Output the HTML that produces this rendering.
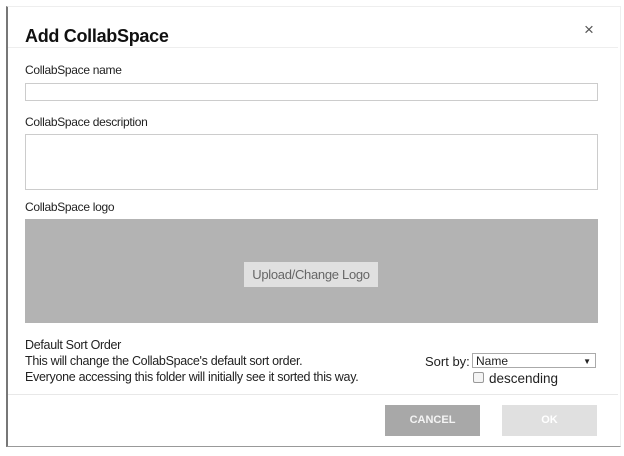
<!DOCTYPE html>
<html><head><style>
body{margin:0;width:624px;height:456px;background:#fff;font-family:"Liberation Sans",sans-serif;color:#222;position:relative;overflow:hidden}
.a{position:absolute}
.t{font-size:12px;letter-spacing:-0.3px;white-space:nowrap}
</style></head><body>
<div class="a" style="left:6px;top:6px;width:612px;height:439px;border-left:2px solid #777;border-bottom:1px solid #999;border-top:1px solid #eee;border-right:1px solid #eee"></div>
<div class="a" style="left:8px;top:47px;width:610px;height:1px;background:#eee"></div>
<div class="a" style="left:25px;top:26px;font-size:18px;font-weight:bold;color:#111;letter-spacing:-0.3px">Add CollabSpace</div>
<div class="a" style="left:584px;top:20px;font-size:17px;color:#555">×</div>
<div class="a t" style="left:25px;top:63px">CollabSpace name</div>
<div class="a" style="left:25px;top:83px;width:571px;height:16px;border:1px solid #ccc"></div>
<div class="a t" style="left:25px;top:115px">CollabSpace description</div>
<div class="a" style="left:25px;top:134px;width:571px;height:54px;border:1px solid #ccc"></div>
<div class="a t" style="left:25px;top:200px">CollabSpace logo</div>
<div class="a" style="left:25px;top:219px;width:573px;height:104px;background:#b3b3b3"></div>
<div class="a" style="left:244px;top:262px;width:134px;height:25px;background:#e0e0e0;color:#666;font-size:13px;line-height:25px;text-align:center;letter-spacing:-0.3px">Upload/Change Logo</div>
<div class="a t" style="left:25px;top:338px;font-size:12.5px">Default Sort Order</div>
<div class="a t" style="left:25px;top:354px;font-size:12.5px;letter-spacing:-0.3px">This will change the CollabSpace's default sort order.</div>
<div class="a t" style="left:25px;top:370px;font-size:12.5px;letter-spacing:-0.3px">Everyone accessing this folder will initially see it sorted this way.</div>
<div class="a t" style="left:425px;top:354px;font-size:13px;letter-spacing:0">Sort by:</div>
<div class="a" style="left:472px;top:353px;height:15px;border:1px solid #aaa;font-size:12px;line-height:15px;padding-left:3px;box-sizing:border-box;width:124px">Name<span style="position:absolute;right:4px;font-size:8px">▼</span></div>
<div class="a" style="left:473px;top:372px;width:9px;height:9px;border:1px solid #999;border-radius:2px;background:#f4f4f4"></div>
<div class="a t" style="left:489px;top:371px;font-size:13.5px;letter-spacing:0">descending</div>
<div class="a" style="left:8px;top:394px;width:610px;height:1px;background:#e8e8e8"></div>
<div class="a" style="left:385px;top:405px;width:95px;height:31px;background:#a8a8a8;color:#f4f4f4;font-size:11px;font-weight:bold;line-height:31px;text-align:center">CANCEL</div>
<div class="a" style="left:502px;top:405px;width:95px;height:31px;background:#e0e0e0;color:#fff;font-size:11px;font-weight:bold;line-height:31px;text-align:center">OK</div>
</body></html>
